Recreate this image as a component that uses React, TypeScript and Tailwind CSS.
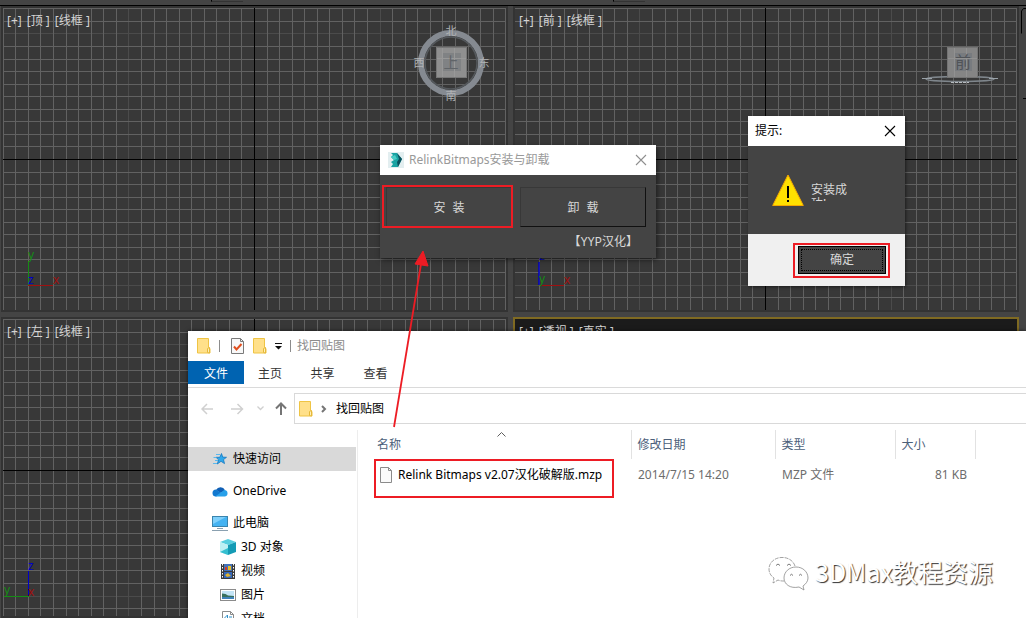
import React from "react";

const steps = Array.from({ length: 41 }, (_, i) => i - 20);

function lineColor(k: number) {
  if (k === 0) return "#000000";
  if (Math.abs(k) === 10) return "#4b4b4b";
  return "#626262";
}

function GridLines({ cx, cy }: { cx: number; cy: number }) {
  const xs = steps.map((k) => ({ k, p: Math.round(cx + k * 12.56) }));
  const ys = steps.filter((k) => Math.abs(k) <= 12).map((k) => ({ k, p: Math.round(cy + k * 12.56) }));
  const left = xs[0].p;
  const right = xs[xs.length - 1].p;
  const top = ys[0].p;
  const bottom = ys[ys.length - 1].p;
  const dim = (k: number) => Math.abs(k) === 10;
  const draw = (pick: (k: number) => boolean) => (
    <>
      {xs.filter((l) => pick(l.k)).map((l) => (
        <rect key={"v" + l.k} x={l.p} y={top} width="1" height={bottom - top + 1} fill={lineColor(l.k)} />
      ))}
      {ys.filter((l) => pick(l.k)).map((l) => (
        <rect key={"h" + l.k} x={left} y={l.p} width={right - left + 1} height="1" fill={lineColor(l.k)} />
      ))}
    </>
  );
  return (
    <g shapeRendering="crispEdges">
      {draw(dim)}
      {draw((k) => !dim(k) && k !== 0)}
      {draw((k) => k === 0)}
    </g>
  );
}

function Viewport({
  name,
  mode,
  active = false,
  children,
}: {
  name: string;
  mode: string;
  active?: boolean;
  children?: React.ReactNode;
}) {
  return (
    <section
      className={
        active
          ? "relative overflow-hidden border-2 border-[#7f6a22] bg-[#1b1b1b]"
          : "relative overflow-hidden border-2 border-[#333333] bg-[#383838]"
      }
    >
      <svg className="absolute -top-0.5 -left-0.5 h-[310px] w-[510px]" aria-hidden="true">
        {children}
      </svg>
      <div className="relative flex gap-[5px] pt-[5px] pl-1 text-xs leading-4 text-[#d4d4d4]">
        <span>[+]</span>
        <span>[{name} ]</span>
        <span>[{mode} ]</span>
      </div>
    </section>
  );
}

function Folder() {
  return (
    <svg width="14" height="17" viewBox="0 0 14 17" aria-hidden="true">
      <path d="M.5 1.500h11v9l1.500 1v4.500H.5z" fill="#ffe08a" stroke="#efc444" />
      <path d="M10.500 15.500v-4l2-1v5.500z" fill="#fff0b8" stroke="#e6b93a" />
    </svg>
  );
}

function CloseGlyph({ color }: { color: string }) {
  return (
    <svg width="12" height="12" viewBox="0 0 12 12" fill="none" stroke={color} strokeWidth="1.1" aria-hidden="true">
      <path d="M1 1l10 10M11 1L1 11" />
    </svg>
  );
}

function InstallWindow() {
  return (
    <section
      aria-label="RelinkBitmaps安装与卸载"
      className="absolute top-[145px] left-[380px] w-[276px] bg-[#444444] pb-1.5 shadow-[1px_2px_5px_rgba(0,0,0,0.5)]"
    >
      <header className="flex h-[30px] items-center bg-white pr-[9px] pl-2 text-xs text-[#999999]">
        <svg className="mr-[5px]" width="16" height="16" viewBox="0 0 16 16" aria-hidden="true">
          <rect width="16" height="16" fill="#e3eef0" />
          <path d="M3 1h6l5 6-4 8H3l2-3-2-2 3-2-3-3 2-2z" fill="#1aa3a3" />
          <path d="M9 1l5 6-4 8-1-5 2-3z" fill="#0b4f5c" />
          <path d="M3 5l4-2 2 4-3 1z" fill="#49cdc6" />
        </svg>
        <h2 className="flex-1">RelinkBitmaps安装与卸载</h2>
        <button type="button" aria-label="关闭">
          <CloseGlyph color="#8f8f8f" />
        </button>
      </header>
      <div className="grid grid-cols-2 gap-2 pt-3 pr-2.5 pl-1.5 font-['Liberation_Mono','Noto_Sans_CJK_SC',monospace] text-xs text-[#d8d8d8]">
        <button type="button" className="h-10 border border-t-[#383838] border-r-[#111111] border-b-[#111111] border-l-[#383838] pt-1">
          安 装
        </button>
        <button type="button" className="h-10 border border-t-[#383838] border-r-[#111111] border-b-[#111111] border-l-[#383838] pt-1">
          卸 载
        </button>
      </div>
      <p className="mt-[7px] pr-[18px] text-right font-['Liberation_Mono','Noto_Sans_CJK_SC',monospace] text-xs leading-[18px] text-[#d8d8d8]">
        【YYP汉化】
      </p>
    </section>
  );
}

function MessageWindow() {
  return (
    <section
      aria-label="提示"
      className="absolute top-[116px] left-[748px] w-[157px] bg-[#444444] shadow-[1px_1px_3px_rgba(0,0,0,0.5)]"
    >
      <header className="flex h-[30px] items-center justify-between bg-white pr-[9px] pl-[7px] text-xs text-black">
        <h2>提示:</h2>
        <button type="button" aria-label="关闭">
          <CloseGlyph color="#000000" />
        </button>
      </header>
      <div className="flex h-[88px] items-center gap-[7px] pl-6">
        <svg width="32" height="32" viewBox="0 0 32 32" aria-hidden="true">
          <path d="M16 1L31.300 31.500H.7z" fill="#ffe000" stroke="#f5a800" />
          <path d="M15 12h2v12h-2zM15 26h2v2h-2z" fill="#000000" />
        </svg>
        <p className="mt-1 h-[18px] w-9 overflow-hidden text-xs leading-[14px] text-[#d8d8d8]">安装成功!</p>
      </div>
      <footer className="flex justify-end bg-[#f0f0f0] pt-3 pr-[19px] pb-3">
        <button type="button" className="h-7 w-[88px] border border-black bg-[#444444] p-0.5 text-xs text-[#d8d8d8]">
          <span className="flex h-full items-center justify-center border border-dotted border-black">确定</span>
        </button>
      </footer>
    </section>
  );
}

function StarIcon() {
  return (
    <svg width="16" height="16" viewBox="0 0 16 16" aria-hidden="true">
      <path d="M9.500 2.500l1.200 3.600 3.800.2-3 2.300 1 4-3.500-2.300L5.300 13l1.300-4.200L4 6.300h3.800z" fill="#2fa8ec" stroke="#1579c0" strokeWidth=".8" />
      <path d="M4 3.500h4M1.500 6.500h3M3 9.500h3M1 12.500h4" stroke="#59b8ee" />
    </svg>
  );
}

function CloudIcon() {
  return (
    <svg width="16" height="16" viewBox="0 0 16 16" aria-hidden="true">
      <path d="M4 7a5 5 0 0 1 9 .3L9 10z" fill="#0f5fb5" />
      <path d="M4 6.500L11 11l-7 2.500a3.500 3.500 0 0 1 0-7z" fill="#1278cf" />
      <path d="M12 7a3.300 3.300 0 0 1 1 6.500H3L11 8z" fill="#27a0ea" />
    </svg>
  );
}

function ComputerIcon() {
  return (
    <svg width="16" height="16" viewBox="0 0 16 16" aria-hidden="true">
      <rect x=".5" y="1.500" width="15" height="10" fill="#45b3f2" stroke="#3a84ad" />
      <path d="M1 2h13L1 9z" fill="#7fd0fb" />
      <path d="M5 13.500h6M0 15.500h16" stroke="#8aa0b0" />
    </svg>
  );
}

function CubeIcon() {
  return (
    <svg width="16" height="16" viewBox="0 0 16 16" aria-hidden="true">
      <path d="M0 3l8-3 8 3-8 3z" fill="#58cfe0" />
      <path d="M0 3l8 3v10l-8-3z" fill="#bdf0f4" />
      <path d="M16 3L8 6v10l8-3z" fill="#149bb5" />
      <path d="M0 13l8-4v7z" fill="#35bfd0" />
    </svg>
  );
}

function FilmIcon() {
  return (
    <svg width="16" height="16" viewBox="0 0 16 16" aria-hidden="true">
      <rect x="1" y="1" width="14" height="15" fill="#3b3b3b" />
      <path d="M2.500 1v15M13.500 1v15" stroke="#ffffff" strokeDasharray="1.500 1.500" />
      <rect x="4" y="1" width="8" height="7" fill="#4572b8" />
      <rect x="4" y="9" width="8" height="6" fill="#3568b8" />
      <path d="M5 7V4h2v3z" fill="#cc382e" />
      <path d="M8 7V3h3v4z" fill="#e7bd27" />
      <path d="M5 12l3-2 3 3-4 1z" fill="#e2b32c" />
    </svg>
  );
}

function PictureIcon() {
  return (
    <svg width="16" height="16" viewBox="0 0 16 16" aria-hidden="true">
      <rect x=".5" y="2.500" width="15" height="11" fill="#ffffff" stroke="#8b8b8b" />
      <rect x="2" y="4" width="12" height="8" fill="#c3e4f6" />
      <path d="M2 6.500q4 0 6 2l6 .5v3H2z" fill="#38705d" />
      <path d="M2 10h12v2H2z" fill="#3f82ba" />
    </svg>
  );
}

function DocumentIcon() {
  return (
    <svg width="16" height="16" viewBox="0 0 16 16" aria-hidden="true">
      <path d="M2.500.5h8l3 3v12h-11z" fill="#ffffff" stroke="#8b8b8b" />
      <path d="M10.500.5v3h3" fill="none" stroke="#8b8b8b" />
      <path d="M4.500 7l3-3v4M9 6h3M4.500 11h7M8 8.500h4M4.500 13h7" fill="none" stroke="#2f8fc8" />
    </svg>
  );
}

const places = [
  { label: "快速访问", icon: <StarIcon />, style: "mb-2 bg-[#d9d9d9] pl-6" },
  { label: "OneDrive", icon: <CloudIcon />, style: "mb-2 pl-6" },
  { label: "此电脑", icon: <ComputerIcon />, style: "pl-6" },
  { label: "3D 对象", icon: <CubeIcon />, style: "pl-8" },
  { label: "视频", icon: <FilmIcon />, style: "pl-8" },
  { label: "图片", icon: <PictureIcon />, style: "pl-8" },
  { label: "文档", icon: <DocumentIcon />, style: "pl-8" },
];

function ExplorerWindow() {
  return (
    <section
      aria-label="找回贴图"
      className="absolute top-[331px] right-0 bottom-0 left-[188px] flex flex-col overflow-hidden bg-white text-xs text-[#222222] shadow-[0_0_4px_rgba(0,0,0,0.6)]"
    >
      <header className="flex h-[29px] shrink-0 items-center pl-[9px] text-[#8c8c8c]">
        <Folder />
        <span className="ml-2 h-3 w-px bg-[#8c8c8c]" />
        <svg className="ml-[11px]" width="13" height="17" viewBox="0 0 13 17" aria-hidden="true">
          <path d="M.5 1.500h9l3 3v12H.5z" fill="#f8f8f8" stroke="#7a7a7a" />
          <path d="M9.500 1.500v3h3" fill="none" stroke="#7a7a7a" />
          <path d="M3 9.500l2.500 3L10.500 7" fill="none" stroke="#e04e1d" strokeWidth="2" />
        </svg>
        <span className="ml-[9px] flex">
          <Folder />
        </span>
        <svg className="mt-0.5 ml-2" width="7" height="7" viewBox="0 0 7 7" aria-hidden="true">
          <path d="M0 0h7v1H0zM0 3h7L3.500 6.500z" fill="#111111" />
        </svg>
        <span className="ml-2 h-3 w-px bg-[#8c8c8c]" />
        <h2 className="ml-1.5">找回贴图</h2>
      </header>
      <nav className="mt-px flex h-[23px] shrink-0" aria-label="功能区">
        <button type="button" className="w-14 bg-[#0063b1] pt-0.5 text-white">文件</button>
        <button type="button" className="w-[52px] pt-0.5 text-[#333333]">主页</button>
        <button type="button" className="w-[53px] pt-0.5 text-[#333333]">共享</button>
        <button type="button" className="w-[53px] pt-0.5 text-[#333333]">查看</button>
      </nav>
      <div className="mt-[3px] flex h-[37px] shrink-0 items-end border-t border-[#dadada]">
        <div className="flex h-[31px] w-[106px] items-center pl-[13px]">
          <button type="button" aria-label="后退">
            <svg width="13" height="12" viewBox="0 0 13 12" fill="none" stroke="#d0d0d0" strokeWidth="1.500" aria-hidden="true">
              <path d="M12 6H1M6 1L1 6l5 5" />
            </svg>
          </button>
          <button type="button" aria-label="前进" className="ml-[17px]">
            <svg width="13" height="12" viewBox="0 0 13 12" fill="none" stroke="#d0d0d0" strokeWidth="1.500" aria-hidden="true">
              <path d="M0 6h11.500M6.500 1l5 5-5 5" />
            </svg>
          </button>
          <button type="button" aria-label="最近浏览的位置" className="ml-[13px]">
            <svg width="7" height="5" viewBox="0 0 7 5" fill="none" stroke="#cfcfcf" strokeWidth="1.300" aria-hidden="true">
              <path d="M.5.5l3 3 3-3" />
            </svg>
          </button>
          <button type="button" aria-label="上移" className="ml-[11px]">
            <svg width="12" height="13" viewBox="0 0 12 13" fill="none" stroke="#757575" strokeWidth="2" aria-hidden="true">
              <path d="M6 13V1.500M1 6.500l5-5 5 5" />
            </svg>
          </button>
        </div>
        <div className="flex h-[31px] flex-1 items-center border border-r-0 border-[#d9d9d9] pl-1 text-black">
          <Folder />
          <svg className="mr-[9px] ml-2" width="6" height="8" viewBox="0 0 6 8" fill="none" stroke="#757575" strokeWidth="2" aria-hidden="true">
            <path d="M1 1l3 3-3 3" />
          </svg>
          <a href="#folder">找回贴图</a>
        </div>
      </div>
      <div className="flex min-h-0 flex-1 pt-1.5">
        <nav className="w-[170px] shrink-0 border-r border-[#ededed] pt-[17px] pr-px" aria-label="导航窗格">
          {places.map((p) => (
            <a key={p.label} href="#place" className={"flex h-6 items-center gap-[5px] text-black " + p.style}>
              {p.icon}
              {p.label}
            </a>
          ))}
        </nav>
        <div className="flex-1 pl-1.5">
          <table className="w-[611px] table-fixed border-collapse text-left text-[#6d6d6d]">
            <colgroup>
              <col className="w-[267px]" />
              <col className="w-36" />
              <col className="w-[120px]" />
              <col className="w-20" />
            </colgroup>
            <thead className="text-[#4c607a]">
              <tr className="h-[29px]">
                <th className="relative border-r border-[#e2e2e2] pl-[13px] font-normal">
                  名称
                  <svg className="absolute top-0.5 left-[133px]" width="9" height="5" viewBox="0 0 9 5" fill="none" stroke="#5e5e5e" aria-hidden="true">
                    <path d="M.5 4.500l4-4 4 4" />
                  </svg>
                </th>
                <th className="border-r border-[#e2e2e2] pl-1.5 font-normal">修改日期</th>
                <th className="border-r border-[#e2e2e2] pl-1.5 font-normal">类型</th>
                <th className="border-r border-[#e2e2e2] pl-1.5 font-normal">大小</th>
              </tr>
            </thead>
            <tbody>
              <tr className="h-8">
                <td className="pl-4 text-black">
                  <span className="flex items-center gap-[5px] whitespace-nowrap">
                    <svg width="13" height="16" viewBox="0 0 13 16" aria-hidden="true">
                      <path d="M.5.5h8l3 3v12H.5z" fill="#fafafa" stroke="#8b8b8b" />
                      <path d="M8.500.5v3h3" fill="none" stroke="#8b8b8b" />
                    </svg>
                    Relink Bitmaps v2.07汉化破解版.mzp
                  </span>
                </td>
                <td className="pl-[7px]">2014/7/15 14:20</td>
                <td className="pl-[7px]">MZP 文件</td>
                <td className="pr-2 text-right">81 KB</td>
              </tr>
            </tbody>
          </table>
        </div>
      </div>
    </section>
  );
}

export default function App() {
  return (
    <main className="relative flex h-screen flex-col overflow-hidden bg-[#444444] font-['Noto_Sans','Noto_Sans_CJK_SC',sans-serif]">
      <div className="flex h-1.5 shrink-0 items-start gap-[370px] border-b border-black pl-[211px]">
        <span className="h-0.5 w-8 border-b border-l border-b-[#333333] border-l-black" />
        <span className="h-0.5 w-8 border-b border-l border-b-[#333333] border-l-black" />
      </div>
      <div className="grid min-h-0 flex-1 grid-cols-[507fr_506fr] grid-rows-[306fr_301fr] gap-[5px] pr-[7px] pl-px">
        <Viewport name="顶" mode="线框">
          <GridLines cx={253} cy={153} />
          <g fill="none">
            <circle cx="450" cy="57" r="30" stroke="#858a91" strokeWidth="6" />
            <circle cx="450" cy="57" r="26" stroke="#54585c" strokeWidth="1.500" />
          </g>
          <rect x="435.500" y="41.500" width="30" height="30" fill="#8f8f8f" stroke="#777777" />
          <rect x="442" y="47" width="18" height="18" fill="#808284" />
          <path d="M436 52.500h29M441.500 42v29M453.500 42v29" stroke="#989898" />
          <text x="450" y="62" fontSize="15" textAnchor="middle" fill="#606468">上</text>
          <g fontSize="11" textAnchor="middle" fill="#b0b2b4">
            <text x="450" y="29">北</text>
            <text x="450" y="94">南</text>
            <text x="418" y="61">西</text>
            <text x="483" y="61">东</text>
          </g>
          <path d="M27.500 279V256" stroke="#158c15" />
          <path d="M27 279.500h25" stroke="#a01010" />
          <g fontSize="12">
            <text x="27" y="253" fill="#158c15">y</text>
            <text x="27" y="278" fill="#0000c8">z</text>
            <text x="52" y="278" fill="#a01010">x</text>
          </g>
        </Viewport>
        <Viewport name="前" mode="线框">
          <GridLines cx={252} cy={153} />
          <ellipse cx="447" cy="73" rx="34" ry="2.500" fill="none" stroke="#7f868c" strokeWidth="1.500" />
          <path d="M409 72.500h10M476 72.500h9" stroke="#9aa2a8" />
          <path d="M438 76.500h18" stroke="#b8bcc0" strokeDasharray="3 1" />
          <rect x="434.500" y="41.500" width="30" height="30" fill="#858585" stroke="#747474" />
          <rect x="441" y="47" width="18" height="18" fill="#787b7f" />
          <path d="M435 52.500h29M441.500 42v29M453.500 42v29" stroke="#919191" />
          <text x="450" y="62" fontSize="16" textAnchor="middle" fill="#515458">前</text>
          <path d="M26 279V256" stroke="#0000c8" strokeWidth="1.500" />
          <path d="M26 279.500h25" stroke="#a01010" />
          <g fontSize="12">
            <text x="26" y="254" fill="#0000c8">z</text>
            <text x="26" y="277" fill="#158c15">y</text>
            <text x="51" y="278" fill="#a01010">x</text>
          </g>
        </Viewport>
        <Viewport name="左" mode="线框">
          <GridLines cx={253} cy={153} />
          <path d="M27.500 279V254" stroke="#0000c8" />
          <path d="M3 279.500h25" stroke="#158c15" />
          <g fontSize="12">
            <text x="27" y="253" fill="#0000c8">z</text>
            <text x="3" y="277" fill="#158c15">y</text>
            <text x="27" y="279" fill="#a01010">x</text>
          </g>
        </Viewport>
        <Viewport name="透视" mode="真实" active />
      </div>
      <svg className="absolute top-2 right-0 h-[92px] w-[5px]" aria-hidden="true">
        <path d="M5 .5H2.500L.5 3v22.500M2 90.500h3" fill="none" stroke="#000000" />
      </svg>
      <InstallWindow />
      <MessageWindow />
      <ExplorerWindow />
      <div className="absolute top-[555px] left-[768px] flex items-start gap-1.5">
        <svg width="41" height="36" viewBox="0 -1 41 36" fill="#ffffff" stroke="#8a8a8a" strokeWidth=".8" aria-hidden="true">
          <path d="M27 10C25 4 19 1 13 1.500 6 2 1 7 1 13c0 4 2 7 5 9l-1 5 5-3c2 1 4 1 6 1" strokeDasharray="4 1" />
          <path d="M28 11c7 0 12 5 12 11 0 3-2 6-5 8l1 4-5-3c-9 2-15-3-15-9s5-11 12-11z" />
          <path d="M8 9.500q2-3 4 0M19 9.500q2-3 4 0M22 19.500q1.500-2.500 3 0M31 19.500q1.500-2.500 3 0" fill="none" stroke="#555555" />
        </svg>
        <span className="font-['Noto_Sans_CJK_SC',sans-serif] text-[25px] leading-8 text-white [text-shadow:1px_1px_1px_#333333]">
          3DMax教程资源
        </span>
      </div>
      <svg className="pointer-events-none absolute inset-0 h-full w-full" fill="none" stroke="#ed1c24" strokeWidth="2" aria-hidden="true">
        <rect x="383" y="186" width="129" height="41" />
        <rect x="794" y="244" width="95" height="33" />
        <rect x="375" y="460" width="238" height="37" />
        <path d="M394 427L421 264" strokeWidth="1.800" />
        <path d="M423 251l5 15-13-2z" fill="#ed1c24" strokeWidth="1" />
      </svg>
    </main>
  );
}
